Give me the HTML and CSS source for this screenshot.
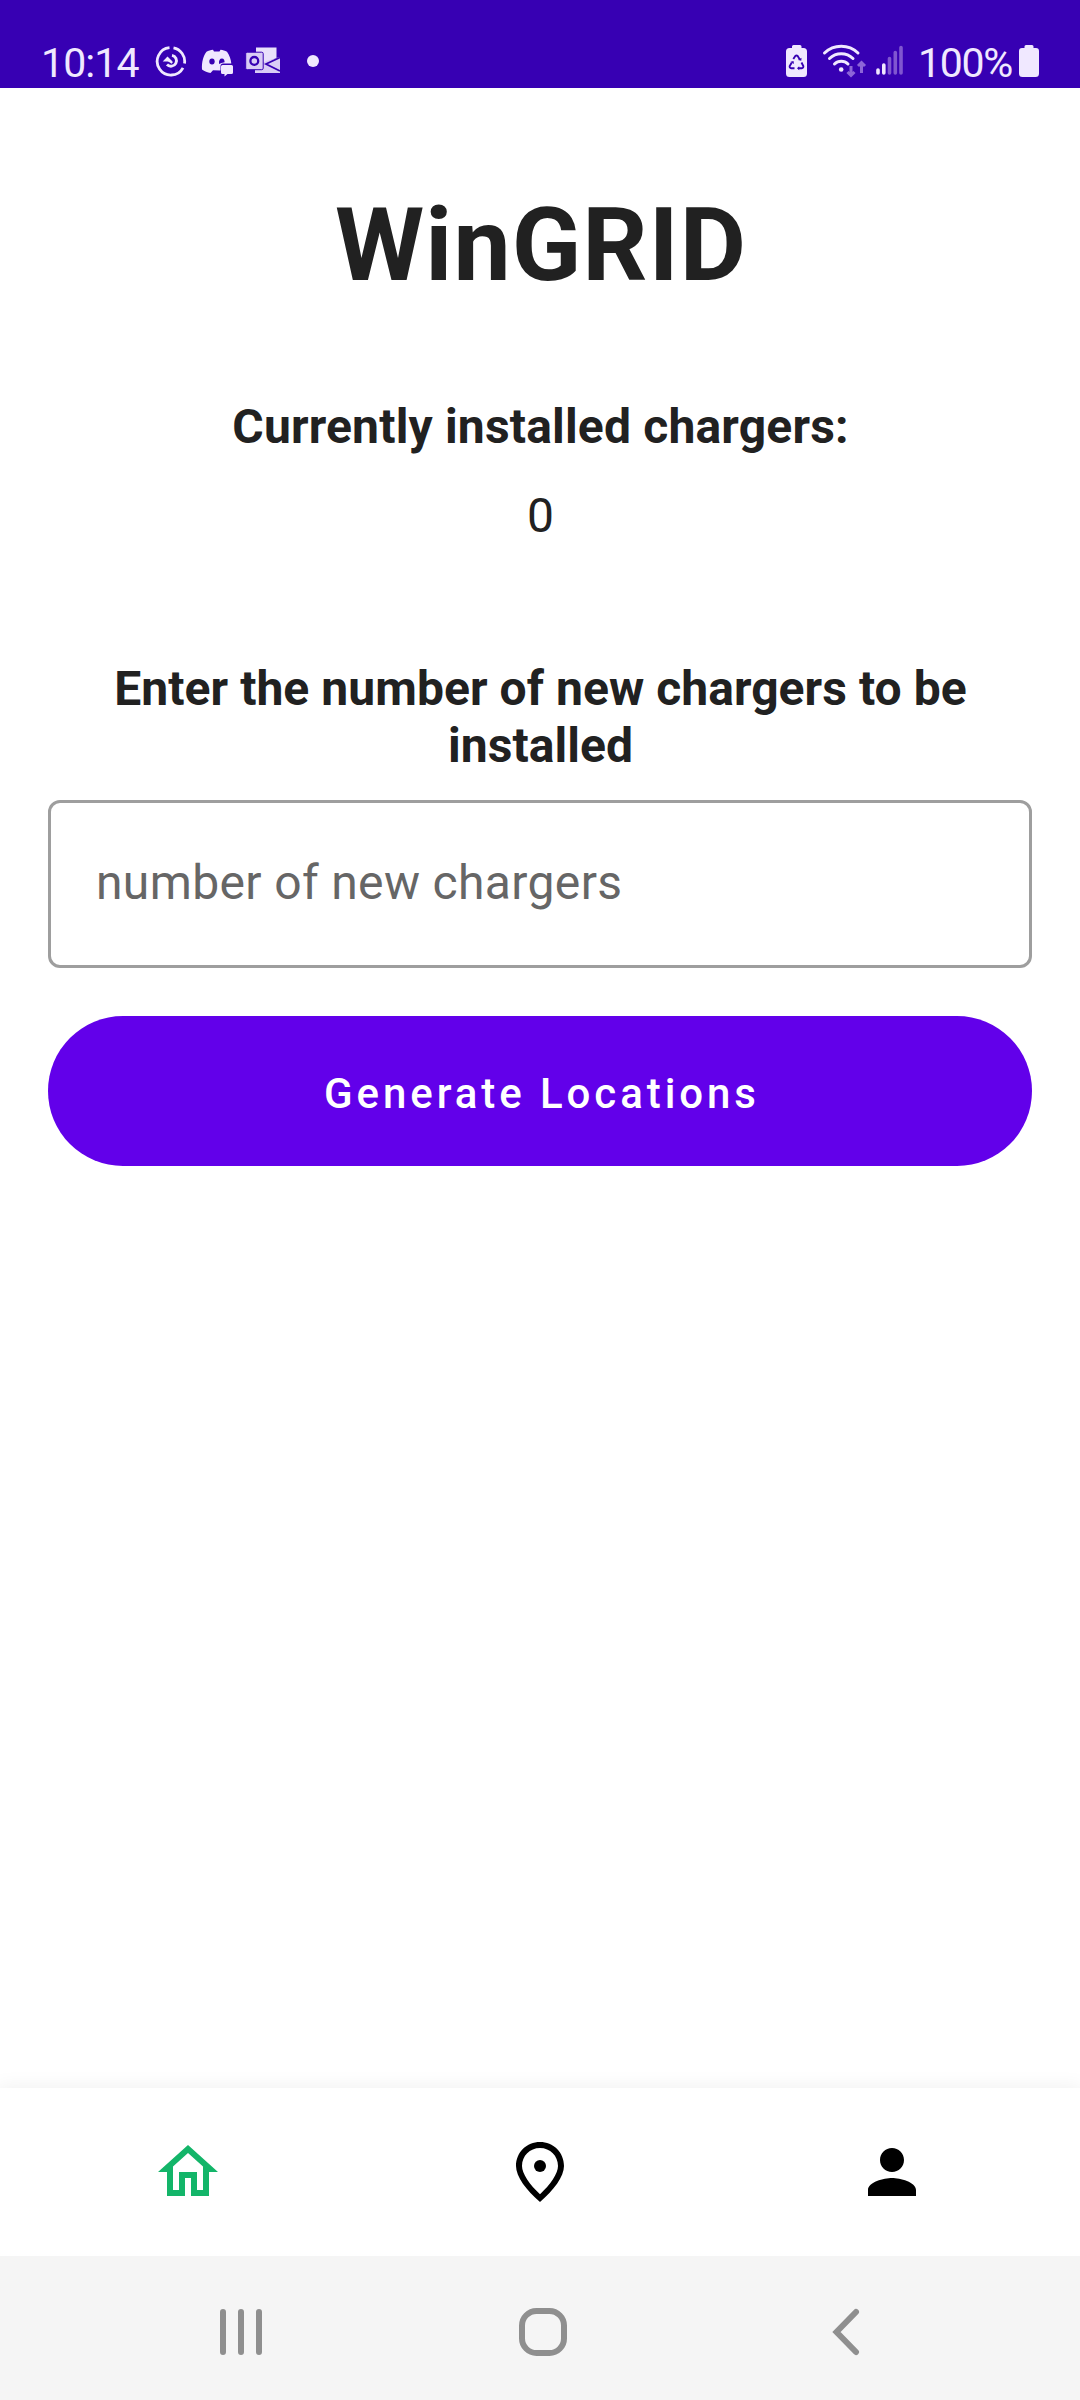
FILE: index.html
```html
<!DOCTYPE html>
<html lang="en">
<head>
<meta charset="utf-8">
<title>WinGRID</title>
<link rel="stylesheet" href="styles.css">
</head>
<body>
<div class="screen">
  <header class="status">
    <div class="status-group">
      <span class="clock">10:14</span>
      <svg class="status-icon" width="32" height="40" viewBox="155 40 32 40" fill="none" stroke="#f0e8ff" stroke-width="2.8">
        <path d="M169.500 47.700A13.700 13.700 0 1 0 183 67.800M184.500 63.500A13.700 13.700 0 0 0 173.500 47.900"/>
        <path d="M172 55.300A5.500 5.500 0 1 1 167 64.500" stroke-width="2.900"/>
        <path d="M162.700 61.500L167.500 56.500L172.500 61.500Z" fill="#f0e8ff" stroke="none"/>
        <path d="M167.500 59.500L172.300 62.800" stroke-width="2.200"/>
      </svg>
      <svg class="status-icon icon-discord" width="34" height="40" viewBox="200 40 34 40" fill="#f0e8ff">
        <path d="M202 69.500C201.500 62 203.500 55.500 206.500 51.800C208.500 50.600 210.500 50 213 49.700L214 51.500H219.500L220.500 49.700C223 50 225 50.600 227 51.800C229.500 55.500 231 59.500 231.300 63.500H223C221.500 63.500 220.500 64.500 220.500 66V70.500L213 70.300L210.500 73C207.500 72.400 204.500 71.300 202 69.500Z"/>
        <ellipse cx="212" cy="61.500" rx="2.700" ry="3" fill="#3700b3"/>
        <path d="M219 64Q218.600 58.500 222 58.500Q224.600 58.700 224.600 62.200L221.500 63Z" fill="#3700b3"/>
        <path d="M222.500 65H231.500Q233 65 233 66.500V72.500Q233 74 231.500 74H227.500L224.500 76.500V74H222.500Q221 74 221 72.500V66.500Q221 65 222.500 65Z"/>
      </svg>
      <svg class="status-icon icon-outlook" width="36" height="40" viewBox="245 40 36 40">
        <path d="M256 47.500H276.500V58L264 63L256 60Z" fill="#e9e0fb"/>
        <path d="M266 61L280 57V73H255V70Z" fill="#d9ccf5"/>
        <path d="M280 57.500L266 64L280 71" fill="none" stroke="#3700b3" stroke-width="1.800"/>
        <rect x="245.700" y="52.200" width="17.500" height="17.500" rx="1.500" fill="#d9ccf5" stroke="#3700b3"/>
        <circle cx="254.300" cy="60.900" r="3.900" fill="none" stroke="#3700b3" stroke-width="2.300"/>
      </svg>
      <svg class="status-icon icon-dot" width="12" height="40" viewBox="307 40 12 40"><circle cx="313" cy="61" r="6" fill="#f0e8ff"/></svg>
    </div>
    <div class="status-group">
      <svg class="status-icon" width="22" height="40" viewBox="786 40 22 40">
        <path d="M792 48V46.500Q792 45 793.500 45H800Q801.500 45 801.500 46.500V48H803.500Q807 48 807 51.500V73.500Q807 77 803.500 77H789.500Q786 77 786 73.500V51.500Q786 48 789.500 48Z" fill="#f0e8ff"/>
        <path d="M793.300 59L795.300 56Q796.500 54.800 797.700 56L799.800 59.500M801.500 62.500L803.300 66Q803.700 68 801.700 68.300H798.500M794.500 68.300H791.300Q789.300 68 789.700 66L791.800 62.500" fill="none" stroke="#3700b3" stroke-width="1.900"/>
        <path d="M798 60L801.300 60.700L801.500 57.700ZM799.200 66.300V70.300L797 68.300ZM790.500 61.700L793.500 61L794 64Z" fill="#3700b3"/>
      </svg>
      <svg class="status-icon icon-wifi" width="46" height="40" viewBox="822 40 46 40" fill="none" stroke="#f0e8ff" stroke-width="3" stroke-linecap="round">
        <path d="M824.500 53A24 24 0 0 1 858 53M829.500 58.500A17 17 0 0 1 853 58.500M834.500 64A9.500 9.500 0 0 1 848 64"/>
        <circle cx="841.200" cy="69.500" r="2.300" fill="#f0e8ff" stroke="none"/>
        <path d="M851 66V75M847.500 72L851 75.500L854.500 72M861.500 73V63M858 66L861.500 62.500L865 66" stroke="#8d65d8" stroke-linecap="butt"/>
      </svg>
      <svg class="status-icon icon-signal" width="28" height="40" viewBox="876 40 28 40" fill="none" stroke="#8056d0" stroke-width="3.600" stroke-linecap="round">
        <path d="M889.500 58.500V73M895.300 52.500V73M901 47.500V73"/>
        <path d="M878 70V73M883.800 65V73" stroke="#f0e8ff"/>
      </svg>
      <span class="percent">100%</span>
      <svg class="status-icon icon-battery" width="20" height="40" viewBox="1019 40 20 40"><path d="M1024.500 48V46.500Q1024.500 45 1026 45H1032Q1033.500 45 1033.500 46.500V48H1036Q1039 48 1039 51V73.500Q1039 77 1035.500 77H1022.500Q1019 77 1019 73.500V51Q1019 48 1022 48Z" fill="#f0e8ff"/></svg>
    </div>
  </header>
  <main class="content">
    <h1 class="title">WinGRID</h1>
    <h2 class="label label-installed">Currently installed chargers:</h2>
    <p class="count">0</p>
    <label class="label label-field" for="amount">Enter the number of new chargers to be installed</label>
    <input class="field" id="amount" type="text" placeholder="number of new chargers">
    <button class="button" type="button">Generate Locations</button>
  </main>
  <nav class="tabs">
    <svg class="tab tab-active" viewBox="0 0 24 24"><path d="M12 5.690l5 4.500V18h-2v-6H9v6H7v-7.810l5-4.500M12 3L2 12h3v8h6v-6h2v6h6v-8h3L12 3z"/></svg>
    <svg class="tab" viewBox="0 0 24 24"><path d="M12 2C7.600 2 4 5.400 4 10c0 3.500 3.500 8.200 8 12 4.500-3.800 8-8.500 8-12 0-4.600-3.600-8-8-8zm0 2c3.400 0 6 2.600 6 6 0 2.500-2.600 6.300-6 9.400C8.600 16.300 6 12.500 6 10c0-3.400 2.600-6 6-6z"/><circle cx="12" cy="10" r="2"/></svg>
    <svg class="tab" viewBox="0 0 24 24"><path d="M12 12c2.210 0 4-1.790 4-4s-1.790-4-4-4-4 1.790-4 4 1.790 4 4 4zm0 2c-2.670 0-8 1.340-8 4v2h16v-2c0-2.660-5.330-4-8-4z"/></svg>
  </nav>
  <footer class="system">
    <svg class="sys-icon" width="42" height="48" viewBox="0 0 42 48"><path d="M3 4V44M21 4V44M39 4V44"/></svg>
    <svg class="sys-icon sys-home" width="48" height="48" viewBox="0 0 48 48"><rect x="3" y="3" width="42" height="42" rx="14.500"/></svg>
    <svg class="sys-icon" width="28" height="48" viewBox="0 0 28 48"><path d="M24 4L4.500 24L24 44"/></svg>
  </footer>
</div>
</body>
</html>
```
FILE: styles.css
```css
* { box-sizing: border-box; }
body { margin: 0; background: #fff; font-family: Roboto, sans-serif; color: #212121; }
.screen { width: 1080px; height: 2400px; display: flex; flex-direction: column; overflow: hidden; }
.status { height: 88px; padding: 40px 41px 8px 41px; background: #3700b3; display: flex; justify-content: space-between; color: #f0e8ff; }
.status-group { display: flex; align-items: flex-start; }
.status-icon { display: block; flex: none; }
.clock, .percent { font-size: 41px; line-height: 46px; letter-spacing: -0.9px; }
.clock { width: 114px; }
.icon-discord { margin-left: 13px; }
.icon-outlook { margin-left: 11px; }
.icon-dot { margin-left: 26px; }
.icon-wifi { margin-left: 14px; }
.icon-signal { margin-left: 8px; }
.percent { width: 101px; margin-left: 14px; letter-spacing: -1.3px; }
.content { flex: 1; padding: 0 48px; display: flex; flex-direction: column; background: #fff; text-align: center; }
.title { margin: 97px 0 0; padding-left: 2px; font-size: 102px; line-height: 120px; font-weight: 700; letter-spacing: 1.1px; }
.label { margin: 0; padding-left: 1px; font-size: 48px; line-height: 57px; font-weight: 700; letter-spacing: 0.06px; }
.label-installed { margin-top: 93px; letter-spacing: 0.18px; }
.count { margin: 32px 0 0; padding-left: 1px; font-size: 48px; line-height: 57px; }
.label-field { margin-top: 116px; }
.field { margin: 26px 0 0; height: 168px; padding: 0 45px 4px; border: 3px solid #9e9e9e; border-radius: 12px; background: transparent; font: 400 48px/57px Roboto, sans-serif; letter-spacing: 0.36px; outline: none; }
.field::placeholder { color: #666; opacity: 1; }
.button { margin: 48px 0 0; height: 150px; border: 0; border-radius: 75px; background: #6200ea; color: #fff; font: 500 42px/50px Roboto, sans-serif; letter-spacing: 3.92px; padding: 5px 0 0 4px; }
.tabs { height: 168px; padding: 0 152px; display: flex; align-items: center; justify-content: space-between; background: #fff; box-shadow: 0 0 18px 2px rgba(0, 0, 0, 0.06); }
.tab { width: 72px; height: 72px; fill: #000; }
.tab-active { fill: #13b569; }
.system { height: 144px; padding: 8px 220px 0; display: flex; align-items: center; justify-content: space-between; background: #f5f5f5; position: relative; }
.sys-icon { fill: none; stroke: #8f8f8f; stroke-width: 6; stroke-linecap: round; }
.sys-home { margin-right: 8px; }
```
